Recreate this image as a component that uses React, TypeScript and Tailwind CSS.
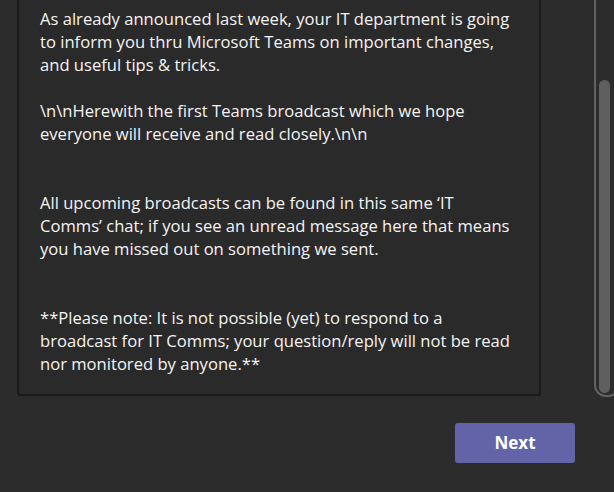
const paragraphs: string[][] = [
  [
    "As already announced last week, your IT department is going",
    "to inform you thru Microsoft Teams on important changes,",
    "and useful tips & tricks.",
  ],
  [""],
  [
    "\\n\\nHerewith the first Teams broadcast which we hope",
    "everyone will receive and read closely.\\n\\n",
  ],
  ["", ""],
  [
    "All upcoming broadcasts can be found in this same \u2018IT",
    "Comms\u2019 chat; if you see an unread message here that means",
    "you have missed out on something we sent.",
  ],
  ["", ""],
  [
    "**Please note: It is not possible (yet) to respond to a",
    "broadcast for IT Comms; your question/reply will not be read",
    "nor monitored by anyone.**",
  ],
];

export default function App() {
  const lines = paragraphs.flat();
  return (
    <div
      className="w-[614px] h-[492px] overflow-hidden bg-[#2d2c2c] flex text-white"
      style={{ fontFamily: '"Open Sans", "Noto Sans", sans-serif' }}
    >
      <div className="pl-[17px] w-[575px] shrink-0 flex flex-col">
        {/* Message card (scrolled, top edge out of view) */}
        <div className="w-[524px] border-x-2 border-b-2 border-[#1b1a1a] bg-[#2b2a2a] pt-[7px] pb-[19px] pl-[21px] text-[16.6px] leading-[23px] text-[#f4f4f4] rounded-b-[3px]">
          {lines.map((line, i) => (
            <div key={i} className="whitespace-nowrap h-[23px]">
              {line}
            </div>
          ))}
        </div>

        <div className="flex justify-end mt-[27px]">
          <button className="w-[120px] h-[40px] rounded-[3px] bg-[#6264a7] text-white text-[17px] font-bold">
            Next
          </button>
        </div>
      </div>

      {/* Scrollbar */}
      <div className="ml-[19px] w-[26px] h-[397px] shrink-0 border-2 border-t-0 border-[#626262] rounded-b-[12px] pl-[3px] flex flex-col">
        <div className="mt-[80px] w-[11px] h-[313px] rounded-[6px] bg-[#5f5f5f]" />
      </div>
    </div>
  );
}
